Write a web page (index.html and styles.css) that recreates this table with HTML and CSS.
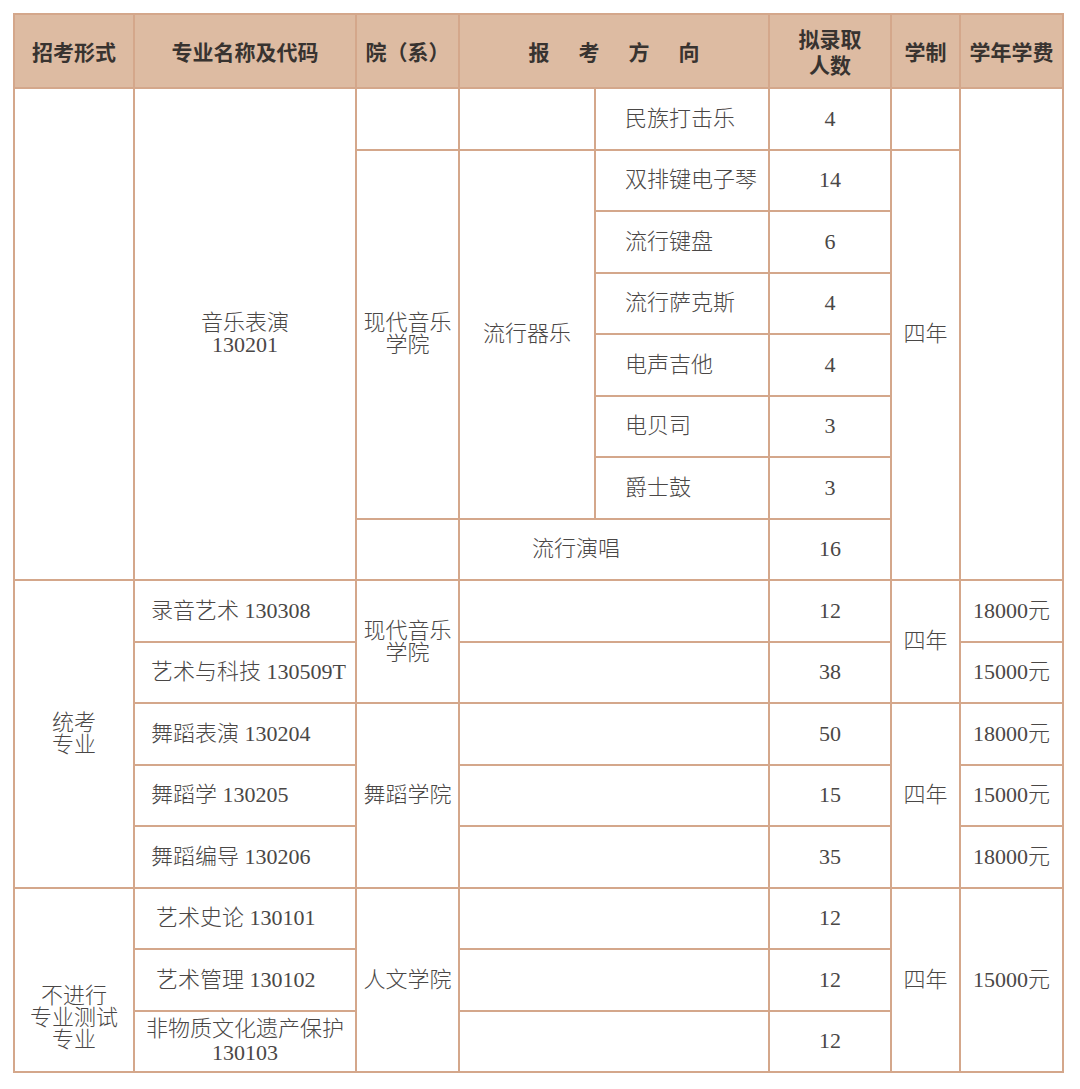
FILE: index.html
```html
<!DOCTYPE html>
<html lang="zh-CN">
<head>
<meta charset="utf-8">
<title>招生计划</title>
<link rel="stylesheet" href="styles.css">
</head>
<body>
<div class="sheet">
  <div class="th">招考形式</div>
  <div class="th">专业名称及代码</div>
  <div class="th">院（系）</div>
  <div class="th cs2 spaced"><span>报</span><span>考</span><span>方</span><span>向</span></div>
  <div class="th two">拟录取<br>人数</div>
  <div class="th">学制</div>
  <div class="th">学年学费</div>

  <div class="td rs8"></div>
  <div class="td rs8 lines">音乐表演<br>130201</div>
  <div class="td"></div>
  <div class="td"></div>
  <div class="td dir">民族打击乐</div>
  <div class="td">4</div>
  <div class="td"></div>
  <div class="td rs8"></div>

  <div class="td rs6 lines">现代音乐<br>学院</div>
  <div class="td rs6">流行器乐</div>
  <div class="td dir">双排键电子琴</div>
  <div class="td">14</div>
  <div class="td rs7 up">四年</div>

  <div class="td dir">流行键盘</div>
  <div class="td">6</div>
  <div class="td dir">流行萨克斯</div>
  <div class="td">4</div>
  <div class="td dir">电声吉他</div>
  <div class="td">4</div>
  <div class="td dir">电贝司</div>
  <div class="td">3</div>
  <div class="td dir">爵士鼓</div>
  <div class="td">3</div>

  <div class="td"></div>
  <div class="td cs2 sing">流行演唱</div>
  <div class="td">16</div>

  <div class="td rs5 lines">统考<br>专业</div>
  <div class="td name">录音艺术 130308</div>
  <div class="td rs2 lines">现代音乐<br>学院</div>
  <div class="td cs2"></div>
  <div class="td">12</div>
  <div class="td rs2">四年</div>
  <div class="td">18000元</div>

  <div class="td name">艺术与科技 130509T</div>
  <div class="td cs2"></div>
  <div class="td">38</div>
  <div class="td">15000元</div>

  <div class="td name">舞蹈表演 130204</div>
  <div class="td rs3">舞蹈学院</div>
  <div class="td cs2"></div>
  <div class="td">50</div>
  <div class="td rs3">四年</div>
  <div class="td">18000元</div>

  <div class="td name">舞蹈学 130205</div>
  <div class="td cs2"></div>
  <div class="td">15</div>
  <div class="td">15000元</div>

  <div class="td name">舞蹈编导 130206</div>
  <div class="td cs2"></div>
  <div class="td">35</div>
  <div class="td">18000元</div>

  <div class="td rs3 lines down">不进行<br>专业测试<br>专业</div>
  <div class="td name2">艺术史论 130101</div>
  <div class="td rs3">人文学院</div>
  <div class="td cs2"></div>
  <div class="td">12</div>
  <div class="td rs3">四年</div>
  <div class="td rs3">15000元</div>

  <div class="td name2">艺术管理 130102</div>
  <div class="td cs2"></div>
  <div class="td">12</div>

  <div class="td lines heritage">非物质文化遗产保护<br>130103</div>
  <div class="td cs2"></div>
  <div class="td">12</div>
</div>
</body>
</html>
```

FILE: styles.css
```css
html, body {
  margin: 0;
  padding: 0;
  background: #ffffff;
}

body {
  width: 1080px;
  height: 1089px;
  overflow: hidden;
}

.sheet {
  margin: 13px 0 0 13px;
  width: 1051px;
  box-sizing: border-box;
  padding: 2px;
  display: grid;
  grid-template-columns: 118px 220px 101px 134px 172px 120px 67px 101px;
  grid-template-rows: 72px repeat(16, 59.5px);
  gap: 2px;
  background: #d4a78b;
}

.th {
  background: #ddbba2;
  color: #383330;
  font-family: "Noto Sans CJK SC", "Noto Sans", sans-serif;
  font-size: 21px;
  font-weight: 600;
  display: flex;
  align-items: center;
  justify-content: center;
  text-align: center;
}

.th.two {
  line-height: 26px;
}

.th.spaced {
  gap: 29px;
}

.td {
  background: #ffffff;
  color: #4a4746;
  font-family: "Liberation Serif", "Noto Sans CJK SC", serif;
  font-size: 22px;
  font-weight: 300;
  display: flex;
  align-items: center;
  justify-content: center;
  text-align: center;
  line-height: 1.2;
}

.cs2 { grid-column: span 2; }
.rs2 { grid-row: span 2; }
.rs3 { grid-row: span 3; }
.rs5 { grid-row: span 5; }
.rs6 { grid-row: span 6; }
.rs7 { grid-row: span 7; }
.rs8 { grid-row: span 8; }

.lines {
  line-height: 22px;
}

.heritage {
  line-height: 24px;
}

.dir {
  justify-content: flex-start;
  padding-left: 29px;
}

.name {
  justify-content: flex-start;
  padding-left: 16px;
}

.name2 {
  justify-content: flex-start;
  padding-left: 21px;
}

.sing {
  justify-content: flex-start;
  padding-left: 72px;
}

.up {
  padding-bottom: 61px;
}

.down {
  padding-top: 76px;
}
```
